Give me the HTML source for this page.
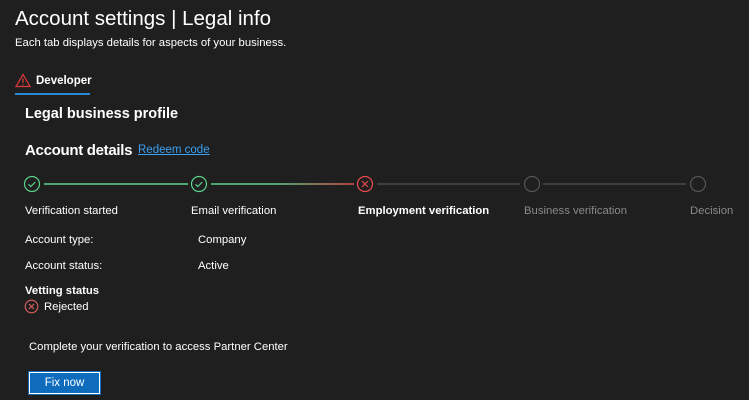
<!DOCTYPE html><html><head><style>
body{margin:0;width:749px;height:400px;background:#1f1f1f;color:#fff;font-family:"Liberation Sans",sans-serif;position:relative;overflow:hidden}
.a{position:absolute;white-space:nowrap}
</style></head><body>
<div class="a" style="left:15px;top:7px;font-size:20.5px;">Account settings | Legal info</div>
<div class="a" style="left:15px;top:37px;font-size:11.3px;">Each tab displays details for aspects of your business.</div>
<svg class="a" style="left:15px;top:73px" width="16" height="15"><path d="M8 1.5L15 13.5H1Z" fill="none" stroke="#e03a3a" stroke-width="1.2"/><path d="M8 5.5V10M8 11.3V12.3" stroke="#e03a3a" stroke-width="1.2"/></svg>
<div class="a" style="left:36px;top:75px;font-size:11.5px;font-weight:bold;">Developer</div>
<div class="a" style="left:15px;top:93px;width:75px;height:2px;background:#2b88d8"></div>
<div class="a" style="left:25px;top:106px;font-size:14.5px;font-weight:bold;">Legal business profile</div>
<div class="a" style="left:25px;top:142px;font-size:15px;font-weight:bold;letter-spacing:-0.3px;">Account details</div>
<div class="a" style="left:138px;top:144px;font-size:11.5px;color:#3aa0f3;text-decoration:underline;">Redeem code</div>
<svg class="a" style="left:0;top:170px" width="749" height="30">
<defs><linearGradient id="g" gradientUnits="userSpaceOnUse" x1="211" y1="0" x2="354" y2="0"><stop offset="0" stop-color="#5dd38a"/><stop offset="0.45" stop-color="#5dd38a"/><stop offset="1" stop-color="#e84c4c"/></linearGradient></defs>
<line x1="44" y1="14" x2="188" y2="14" stroke="#5dd38a" stroke-width="1.5"/>
<rect x="211" y="13.25" width="143" height="1.5" fill="url(#g)"/>
<line x1="377" y1="14" x2="520" y2="14" stroke="#4a4a4a" stroke-width="1.5"/>
<line x1="543" y1="14" x2="686" y2="14" stroke="#4a4a4a" stroke-width="1.5"/>
<circle cx="32" cy="14" r="7.5" fill="none" stroke="#5dd38a" stroke-width="1.2"/><path d="M28.5 14.3l2.3 2.2 4.5-4.5" fill="none" stroke="#5dd38a" stroke-width="1.2"/>
<circle cx="199" cy="14" r="7.5" fill="none" stroke="#5dd38a" stroke-width="1.2"/><path d="M195.5 14.3l2.3 2.2 4.5-4.5" fill="none" stroke="#5dd38a" stroke-width="1.2"/>
<circle cx="365" cy="14" r="7.5" fill="none" stroke="#e84c4c" stroke-width="1.2"/><path d="M362 11l6 6M368 11l-6 6" stroke="#e84c4c" stroke-width="1.2"/>
<circle cx="532" cy="14" r="7.5" fill="none" stroke="#555" stroke-width="1.2"/>
<circle cx="698" cy="14" r="7.5" fill="none" stroke="#555" stroke-width="1.2"/>
</svg>
<div class="a" style="left:25px;top:205px;font-size:11.3px;">Verification started</div>
<div class="a" style="left:191px;top:205px;font-size:11.3px;">Email verification</div>
<div class="a" style="left:358px;top:205px;font-size:11.3px;font-weight:bold;">Employment verification</div>
<div class="a" style="left:524px;top:205px;font-size:11.3px;color:#8a8a8a;">Business verification</div>
<div class="a" style="left:690px;top:205px;font-size:11.3px;color:#8a8a8a;">Decision</div>
<div class="a" style="left:25px;top:234px;font-size:11.3px;">Account type:</div>
<div class="a" style="left:198px;top:234px;font-size:11.3px;">Company</div>
<div class="a" style="left:25px;top:260px;font-size:11.3px;">Account status:</div>
<div class="a" style="left:198px;top:260px;font-size:11.3px;">Active</div>
<div class="a" style="left:25px;top:285px;font-size:11.3px;font-weight:bold;">Vetting status</div>
<svg class="a" style="left:24px;top:299px" width="16" height="16"><circle cx="7.5" cy="7.5" r="6.3" fill="none" stroke="#e06060" stroke-width="1.1"/><path d="M5 5l5 5M10 5l-5 5" stroke="#e06060" stroke-width="1.1"/></svg>
<div class="a" style="left:44px;top:301px;font-size:11.3px;">Rejected</div>
<div class="a" style="left:29px;top:341px;font-size:11.3px;">Complete your verification to access Partner Center</div>
<div class="a" style="left:29px;top:372px;width:71px;height:22px;background:#0f6cbd;box-sizing:border-box;border:1px solid #fff;box-shadow:0 0 0 1px #0f6cbd;font-size:11.5px;line-height:20px;text-align:center;">Fix now</div>
</body></html>
